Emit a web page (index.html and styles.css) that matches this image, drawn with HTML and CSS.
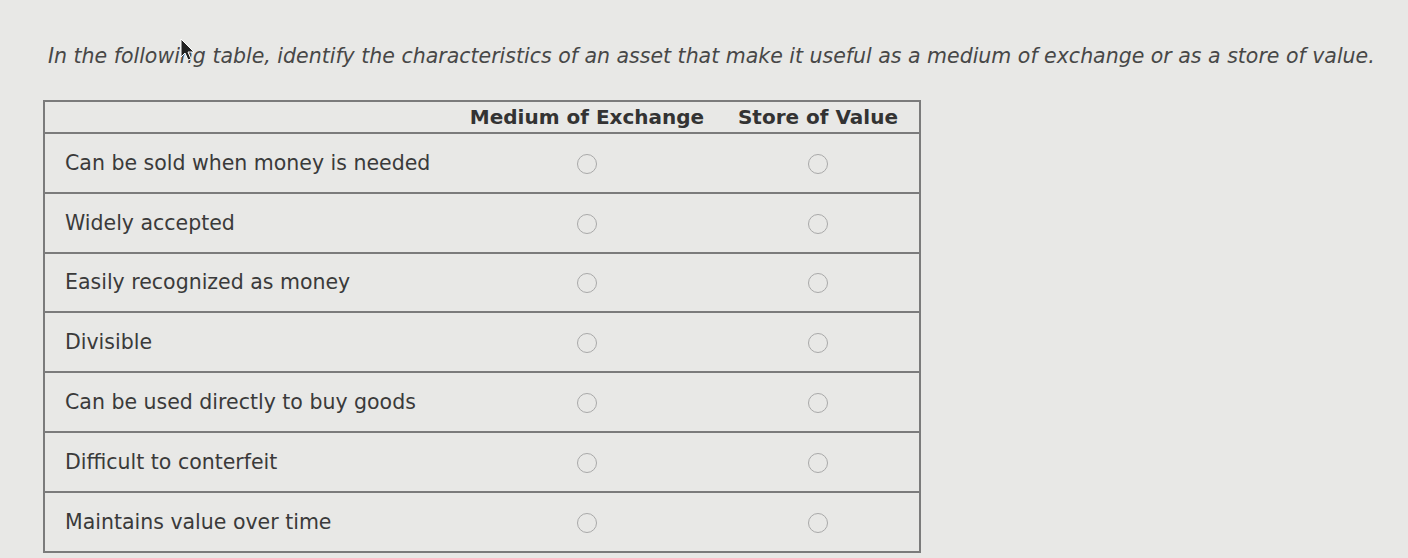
FILE: index.html
```html
<!DOCTYPE html>
<html>
<head>
<meta charset="utf-8">
<link rel="stylesheet" href="styles.css">
</head>
<body>
<div class="page">
  <p class="prompt">In the following table, identify the characteristics of an asset that make it useful as a medium of exchange or as a store of value.</p>
  <table class="grid">
    <thead>
      <tr>
        <th class="label-col"></th>
        <th class="opt-col">Medium of Exchange</th>
        <th class="opt-col">Store of Value</th>
      </tr>
    </thead>
    <tbody>
      <tr><td class="label">Can be sold when money is needed</td><td class="opt"><span class="radio"></span></td><td class="opt"><span class="radio"></span></td></tr>
      <tr><td class="label">Widely accepted</td><td class="opt"><span class="radio"></span></td><td class="opt"><span class="radio"></span></td></tr>
      <tr><td class="label">Easily recognized as money</td><td class="opt"><span class="radio"></span></td><td class="opt"><span class="radio"></span></td></tr>
      <tr><td class="label">Divisible</td><td class="opt"><span class="radio"></span></td><td class="opt"><span class="radio"></span></td></tr>
      <tr><td class="label">Can be used directly to buy goods</td><td class="opt"><span class="radio"></span></td><td class="opt"><span class="radio"></span></td></tr>
      <tr><td class="label">Difficult to conterfeit</td><td class="opt"><span class="radio"></span></td><td class="opt"><span class="radio"></span></td></tr>
      <tr><td class="label">Maintains value over time</td><td class="opt"><span class="radio"></span></td><td class="opt"><span class="radio"></span></td></tr>
    </tbody>
  </table>
  <svg class="cursor" width="16" height="24" viewBox="0 0 16 24"><path d="M1 1 L1 19 L5 15 L8 22 L11 21 L8 14 L14 14 Z" fill="#222" stroke="#fff" stroke-width="1"/></svg>
</div>
</body>
</html>
```
FILE: styles.css
```css
html, body {
  margin: 0;
  padding: 0;
  background: #e8e8e6;
}
.page {
  position: relative;
  padding: 43px 0 0 43px;
  font-family: "DejaVu Sans", Verdana, sans-serif;
  color: #3c3c3c;
}
.prompt {
  margin: 0 0 30px 5px;
  font-style: italic;
  font-size: 20.5px;
  line-height: 27px;
  color: #474747;
}
.grid {
  border-collapse: collapse;
  width: 878px;
  border: 2px solid #7b7b7b;
  font-size: 20.5px;
}
.grid th {
  height: 30px;
  padding: 0;
  font-weight: bold;
  font-size: 20px;
  color: #333;
  text-align: center;
  border-bottom: 2px solid #7b7b7b;
}
.label-col { width: 412px; }
.opt-col:nth-child(2) { width: 260px; }
.grid td {
  height: 57.8px;
  padding: 0;
  border-bottom: 2px solid #7b7b7b;
}
.label {
  padding-left: 20px !important;
  color: #3a3a3a;
}
.opt { text-align: center; }
.radio {
  display: inline-block;
  width: 18px;
  height: 18px;
  border: 1.5px solid #a9a9a9;
  border-radius: 50%;
  vertical-align: middle;
}
.cursor {
  position: absolute;
  left: 180px;
  top: 38px;
}
```
